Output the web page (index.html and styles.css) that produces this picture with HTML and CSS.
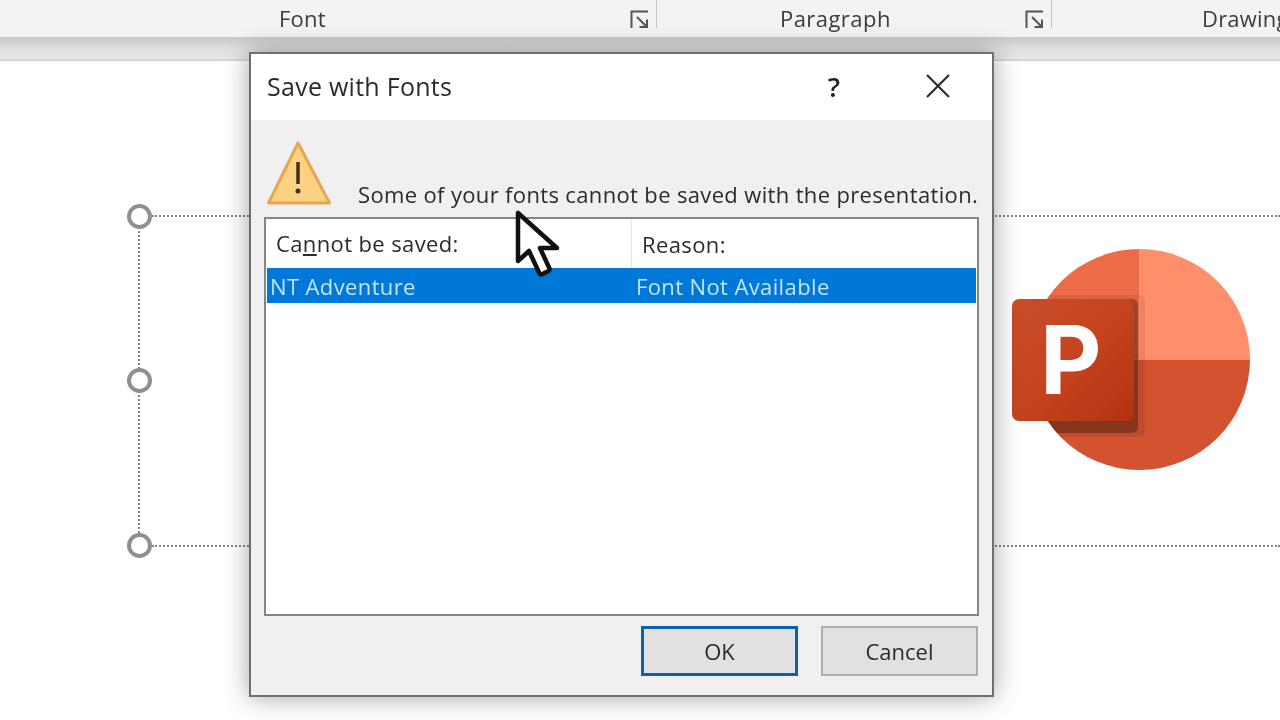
FILE: index.html
```html
<!DOCTYPE html>
<html lang="en">
<head>
<meta charset="utf-8">
<title>Save with Fonts</title>
<link rel="stylesheet" href="styles.css">
</head>
<body>
<div class="stage">
  <header class="ribbon">
    <div class="group group-font">
      <span class="group-label">Font</span>
      <svg class="launcher" viewBox="0 0 20 20"><path d="M1.500 18V1.500H18M7 7l10 10M17 9.500V17H9.500"/></svg>
    </div>
    <div class="group group-para">
      <span class="group-label label-para">Paragraph</span>
      <svg class="launcher" viewBox="0 0 20 20"><path d="M1.500 18V1.500H18M7 7l10 10M17 9.500V17H9.500"/></svg>
    </div>
    <div class="group group-draw">
      <span class="group-label">Drawing</span>
    </div>
  </header>
  <div class="ribbon-shadow"></div>
  <main class="canvas">
    <div class="sel-line sel-top"></div>
    <div class="sel-line sel-bottom"></div>
    <div class="sel-line sel-left"></div>
    <div class="handle handle-a"></div>
    <div class="handle handle-b"></div>
    <div class="handle handle-c"></div>

    <svg class="logo" viewBox="0 0 240 224" aria-label="PowerPoint">
      <defs>
        <linearGradient id="pgrad" x1="0" y1="0" x2="1" y2="1">
          <stop offset="0" stop-color="#ca4c28"/>
          <stop offset="0.5" stop-color="#c5441f"/>
          <stop offset="1" stop-color="#b3310f"/>
        </linearGradient>
        <clipPath id="disc"><circle cx="127.500" cy="110.500" r="110.500"/></clipPath>
      </defs>
      <path class="q-tl" d="M127.500 110.500V0A110.500 110.500 0 0 0 17 110.500Z"/>
      <path class="q-tr" d="M127.500 0A110.500 110.500 0 0 1 238 110.500H127.500Z"/>
      <path class="q-b" d="M17 110.500A110.500 110.500 0 0 0 238 110.500Z"/>
      <g clip-path="url(#disc)">
        <rect class="logo-sh1" x="10" y="46" width="123" height="142" rx="6"/>
        <rect class="logo-sh2" x="10" y="50" width="116" height="134" rx="6"/>
      </g>
      <rect x="0" y="50" width="122" height="122" rx="7" fill="url(#pgrad)"/>
      <text class="logo-p" x="28" y="145">P</text>
    </svg>

    <section class="dialog">
      <div class="title-bar">
        <h1 class="title">Save with Fonts</h1>
        <span class="help">?</span>
        <svg class="close" viewBox="0 0 24 24"><path d="M1 1l22 22M23 1L1 23"/></svg>
      </div>
      <div class="body">
        <div class="message-row">
          <svg class="warn" viewBox="0 0 65 64">
            <path class="warn-tri" d="M31 2L1.500 62H62.500Z"/>
            <path class="warn-bar" d="M31 21V43"/>
            <circle class="warn-dot" cx="31" cy="50" r="2.500"/>
          </svg>
          <p class="message">Some of your fonts cannot be saved with the presentation.</p>
        </div>
        <div class="list">
          <div class="list-head">
            <div class="col-a">Ca<span class="ul">n</span>not be saved:</div>
            <div class="col-b">Reason:</div>
          </div>
          <div class="list-row">
            <div class="cell-a">NT Adventure</div>
            <div class="cell-b">Font Not Available</div>
          </div>
        </div>
        <div class="actions">
          <button class="btn btn-default">OK</button>
          <button class="btn">Cancel</button>
        </div>
      </div>
    </section>

    <svg class="cursor" viewBox="0 0 46 68"><path d="M3 3V51L14 41L24.500 63.500Q25.500 65 27.500 64L33.500 61Q35 60 34.500 58.500L25 38H42Z"/></svg>
  </main>
</div>
</body>
</html>
```
FILE: styles.css
```css
* { box-sizing: border-box; }
html, body { margin: 0; padding: 0; }
body { background: #fff; font-family: "Open Sans", "Noto Sans", sans-serif; color: #222; }
.stage { position: relative; width: 1280px; height: 720px; overflow: hidden; display: flex; flex-direction: column; filter: blur(0.45px); }

.ribbon { height: 37px; flex: none; background: #f3f3f1; display: grid; grid-template-columns: 657px 395px 1fr; }
.group { position: relative; display: flex; align-items: center; height: 37px; font-size: 22px; letter-spacing: 0.2px; color: #3c3c3c; }
.group-font::after, .group-para::after { content: ""; position: absolute; right: 0; top: 0; width: 1px; height: 28px; background: #c4c4c2; }
.group-font { padding-left: 279px; padding-right: 7px; }
.group-para { padding-left: 123px; padding-right: 7px; }
.group-draw { padding-left: 150px; white-space: nowrap; }
.group-label { line-height: 37px; }
.label-para { letter-spacing: 0.45px; }
.launcher { width: 20px; height: 20px; margin-left: auto; margin-top: 2px; fill: none; stroke: #555; stroke-width: 2; }

.ribbon-shadow { height: 24px; flex: none; background: linear-gradient(#c8c8c6, #dedede 45%, #e6e6e6 88%, #cfcfcf); }
.canvas { position: relative; flex: 1; background: #fff; }

.sel-line { position: absolute; border: 0 dotted #858585; }
.sel-top { left: 152px; right: 0; top: 154px; border-top-width: 2px; }
.sel-bottom { left: 152px; right: 0; top: 484px; border-top-width: 2px; }
.sel-left { left: 138px; top: 166px; height: 318px; border-left-width: 2px; }
.handle { position: absolute; left: 127px; width: 25px; height: 25px; border-radius: 50%; background: #fff; border: 4px solid #8f8f8f; }
.handle-a { top: 143px; }
.handle-b { top: 307px; }
.handle-c { top: 472px; }

.logo { position: absolute; left: 1012px; top: 188px; width: 240px; height: 224px; }
.q-tl { fill: #ed6c47; }
.q-tr { fill: #ff8f6b; }
.q-b { fill: #d35230; }
.logo-sh1 { fill: #000; opacity: 0.08; }
.logo-sh2 { fill: #000; opacity: 0.3; }
.logo-p { font-family: "Inter", "Liberation Sans", sans-serif; font-weight: 700; font-size: 95px; fill: #fff; }

.dialog { position: absolute; left: 249px; top: -9px; width: 745px; height: 645px; background: #f0f0f0; border: 2px solid #6e6e6e; display: flex; flex-direction: column; box-shadow: 0 0 24px rgba(0,0,0,0.36); }
.title-bar { height: 66px; flex: none; background: #fff; display: flex; align-items: center; padding-left: 16px; padding-bottom: 2px; }
.title { margin: 0; font-size: 25px; font-weight: 400; letter-spacing: 0.27px; color: #2b2b2b; flex: 1; }
.help { font-size: 27px; font-weight: 600; color: #222; margin-right: 86px; }
.close { width: 24px; height: 24px; margin-right: 42px; fill: none; stroke: #2b2b2b; stroke-width: 2.200; }
.body { flex: 1; display: flex; flex-direction: column; padding: 0 13px 0 13px; }
.message-row { height: 97px; display: flex; align-items: flex-end; padding-left: 3px; }
.warn { width: 65px; height: 64px; flex: none; margin-bottom: 12px; }
.warn-tri { fill: #fdd383; stroke: #e9a552; stroke-width: 3; stroke-linejoin: round; }
.warn-bar { stroke: #3f3120; stroke-width: 3.500; }
.warn-dot { fill: #3f3120; }
.message { margin: 0 0 8px 26px; font-size: 22px; letter-spacing: 0.35px; white-space: nowrap; color: #2b2b2b; }
.list { height: 399px; flex: none; background: #fff; border: 2px solid #868686; display: flex; flex-direction: column; font-size: 22px; letter-spacing: 0.38px; }
.list-head { height: 49px; display: grid; grid-template-columns: 366px 1fr; align-items: center; color: #2b2b2b; }
.col-a { padding-left: 10px; border-right: 1px solid #e4e4e4; line-height: 49px; }
.col-b { padding-left: 10px; }
.ul { text-decoration: underline; }
.list-row { height: 35px; margin: 0 1px; background: #0078d7; color: #c5e3fb; display: grid; grid-template-columns: 366px 1fr; align-items: center; }
.cell-a { padding-left: 3px; }
.cell-b { padding-left: 3px; }
.actions { flex: 1; display: flex; justify-content: flex-end; gap: 23px; padding-top: 10px; padding-right: 1px; }
.btn { width: 157px; height: 50px; background: #e1e1e1; border: 2px solid #adadad; font: inherit; font-size: 22px; color: #2b2b2b; padding: 0; }
.btn-default { border: 3px solid #0b62ab; }

.cursor { position: absolute; left: 515px; top: 149px; width: 46px; height: 68px; fill: #fff; stroke: #111; stroke-width: 4.500; stroke-linejoin: round; }
```
